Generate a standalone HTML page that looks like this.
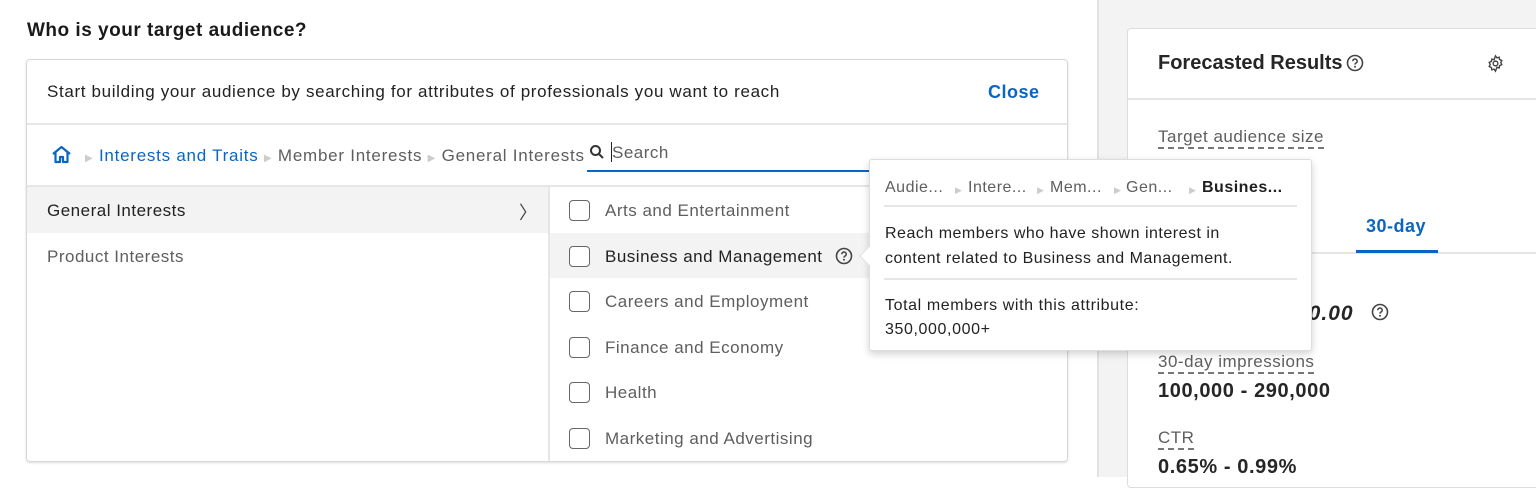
<!DOCTYPE html>
<html><head><style>
*{box-sizing:border-box;margin:0;padding:0}
body{width:1536px;height:477px;overflow:hidden;position:relative;background:#fff;font-family:"Liberation Sans",sans-serif;color:#1f1f1f;letter-spacing:0.5px}
.a{position:absolute}
.t{font-size:17px;color:#5e5e5e;white-space:nowrap}
.cb{position:absolute;left:569px;width:21px;height:21px;border:1.5px solid #666;border-radius:4px;background:#fff}
.dot{border-bottom:2px dashed #777;padding-bottom:1px}
.sep{color:#ccc;font-size:9px;position:absolute;top:185px}
</style></head><body>
<div class="a" style="left:1097px;top:0;width:439px;height:477px;background:#f3f3f3;border-left:2px solid #e2e2e2"></div>
<div class="a" style="left:1127px;top:28px;width:420px;height:460px;background:#fff;border:1px solid #ddd;border-radius:4px"></div>
<div class="a" style="left:1128px;top:98px;width:408px;height:2px;background:#e6e6e6"></div>
<div class="a" style="left:1158px;top:52px;font-size:20px;font-weight:bold;color:#262626;letter-spacing:0">Forecasted Results</div>
<svg class="a" style="left:1346px;top:54px" width="18" height="18" viewBox="0 0 18 18"><circle cx="9" cy="9" r="7.5" fill="none" stroke="#444" stroke-width="1.6"/><path d="M6.8 7.2a2.2 2.2 0 1 1 3 2c-.6.3-.8.7-.8 1.4" fill="none" stroke="#444" stroke-width="1.5"/><circle cx="9" cy="12.8" r="1" fill="#444"/></svg>
<svg class="a" style="left:1486px;top:54px" width="19" height="19" viewBox="0 0 20 20"><path d="M10 2l1.5 2 2.4-.6.4 2.4 2.3 1-1 2.2 1 2.2-2.3 1-.4 2.4-2.4-.6L10 18l-1.5-2-2.4.6-.4-2.4-2.3-1 1-2.2-1-2.2 2.3-1 .4-2.4 2.4.6z" fill="none" stroke="#444" stroke-width="1.5"/><circle cx="10" cy="10" r="2.5" fill="none" stroke="#444" stroke-width="1.5"/></svg>
<div class="a t" style="left:1158px;top:127px"><span class="dot">Target audience size</span></div>
<div class="a" style="left:1128px;top:252px;width:408px;height:2px;background:#e6e6e6"></div>
<div class="a" style="left:1366px;top:216px;font-size:18px;font-weight:bold;color:#0a66c2">30-day</div>
<div class="a" style="left:1356px;top:250px;width:82px;height:3px;background:#0a66c2"></div>
<div class="a" style="left:1296px;top:302px;font-size:21px;font-weight:bold;font-style:italic;color:#262626;letter-spacing:1px">50.00</div>
<svg class="a" style="left:1371px;top:303px" width="18" height="18" viewBox="0 0 18 18"><circle cx="9" cy="9" r="7.5" fill="none" stroke="#444" stroke-width="1.6"/><path d="M6.8 7.2a2.2 2.2 0 1 1 3 2c-.6.3-.8.7-.8 1.4" fill="none" stroke="#444" stroke-width="1.5"/><circle cx="9" cy="12.8" r="1" fill="#444"/></svg>
<div class="a t" style="left:1158px;top:352px"><span class="dot">30-day impressions</span></div>
<div class="a" style="left:1158px;top:380px;font-size:20px;font-weight:bold;color:#262626;letter-spacing:0.6px">100,000 - 290,000</div>
<div class="a t" style="left:1158px;top:428px"><span class="dot">CTR</span></div>
<div class="a" style="left:1158px;top:456px;font-size:20px;font-weight:bold;color:#262626;letter-spacing:0.6px">0.65% - 0.99%</div>

<div class="a" style="left:27px;top:20px;font-size:19px;font-weight:bold;color:#1a1a1a">Who is your target audience?</div>
<div class="a" style="left:26px;top:59px;width:1042px;height:403px;border:1px solid #d9d9d9;border-radius:4px;box-shadow:0 1px 2px rgba(0,0,0,.15)"></div>
<div class="a" style="left:47px;top:82px;font-size:17px;color:#222;letter-spacing:0.65px">Start building your audience by searching for attributes of professionals you want to reach</div>
<div class="a" style="left:988px;top:82px;font-size:18px;font-weight:bold;color:#0a66c2">Close</div>
<div class="a" style="left:27px;top:123px;width:1040px;height:2px;background:#e6e6e6"></div>
<svg class="a" style="left:51px;top:145px" width="21" height="19" viewBox="0 0 21 19"><path d="M2 9L10.5 2 19 9M4.5 7.5V17h4.5v-5h3v5h4.5V7.5" fill="none" stroke="#0a66c2" stroke-width="2.2" stroke-linejoin="round"/></svg>
<div class="a t" style="left:85px;top:146px;font-size:17px;letter-spacing:0.75px"><span style="color:#ccc;font-size:10px">▶</span> <span style="color:#0a66c2">Interests and Traits</span> <span style="color:#ccc;font-size:10px">▶</span> Member Interests <span style="color:#ccc;font-size:10px">▶</span> General Interests</div>
<svg class="a" style="left:589px;top:144px" width="16" height="16" viewBox="0 0 16 16"><circle cx="6.5" cy="6.5" r="4.5" fill="none" stroke="#333" stroke-width="2"/><path d="M10 10l4 4" stroke="#333" stroke-width="2"/></svg>
<div class="a t" style="left:612px;top:143px">Search</div>
<div class="a" style="left:611px;top:142px;width:1px;height:20px;background:#222"></div>
<div class="a" style="left:587px;top:170px;width:290px;height:2px;background:#0a66c2"></div>
<div class="a" style="left:27px;top:185px;width:1040px;height:2px;background:#e6e6e6"></div>
<div class="a" style="left:27px;top:187px;width:521px;height:46px;background:#f3f3f3"></div>
<div class="a" style="left:548px;top:187px;width:2px;height:274px;background:#e6e6e6"></div>
<div class="a" style="left:47px;top:201px;font-size:17px;color:#222">General Interests</div>
<div class="a" style="left:519px;top:199px;font-size:18px;color:#444">〉</div>
<div class="a t" style="left:47px;top:247px">Product Interests</div>
<div class="a" style="left:550px;top:233px;width:320px;height:45px;background:#f3f3f3"></div>
<div class="cb" style="top:200px"></div><div class="a t" style="left:605px;top:201px">Arts and Entertainment</div>
<div class="cb" style="top:246px"></div><div class="a t" style="left:605px;top:247px;color:#222">Business and Management</div>
<svg class="a" style="left:835px;top:247px" width="18" height="18" viewBox="0 0 18 18"><circle cx="9" cy="9" r="7.5" fill="none" stroke="#444" stroke-width="1.6"/><path d="M6.8 7.2a2.2 2.2 0 1 1 3 2c-.6.3-.8.7-.8 1.4" fill="none" stroke="#444" stroke-width="1.5"/><circle cx="9" cy="12.8" r="1" fill="#444"/></svg>
<div class="cb" style="top:291px"></div><div class="a t" style="left:605px;top:292px">Careers and Employment</div>
<div class="cb" style="top:337px"></div><div class="a t" style="left:605px;top:338px">Finance and Economy</div>
<div class="cb" style="top:382px"></div><div class="a t" style="left:605px;top:383px">Health</div>
<div class="cb" style="top:428px"></div><div class="a t" style="left:605px;top:429px">Marketing and Advertising</div>

<div class="a" style="left:869px;top:159px;width:443px;height:192px;background:#fff;border:1px solid #ddd;border-radius:3px;box-shadow:0 3px 8px rgba(0,0,0,.18)"></div>
<div class="a" style="left:862px;top:249px;width:14px;height:14px;background:#fff;transform:rotate(45deg);border-left:1px solid #ddd;border-bottom:1px solid #ddd"></div>
<div class="a t" style="left:885px;top:179px;font-size:16px">Audie...</div>
<span class="a sep" style="left:955px">▶</span>
<div class="a t" style="left:968px;top:179px;font-size:16px">Intere...</div>
<span class="a sep" style="left:1037px">▶</span>
<div class="a t" style="left:1050px;top:179px;font-size:16px">Mem...</div>
<span class="a sep" style="left:1114px">▶</span>
<div class="a t" style="left:1126px;top:179px;font-size:16px">Gen...</div>
<span class="a sep" style="left:1189px">▶</span>
<div class="a t" style="left:1202px;top:179px;font-size:16px;font-weight:bold;color:#1f1f1f">Busines...</div>
<div class="a" style="left:884px;top:205px;width:413px;height:2px;background:#e6e6e6"></div>
<div class="a" style="left:885px;top:221px;font-size:16px;line-height:25px;color:#222;letter-spacing:0.5px">Reach members who have shown interest in<br>content related to Business and Management.</div>
<div class="a" style="left:884px;top:278px;width:413px;height:2px;background:#e6e6e6"></div>
<div class="a" style="left:885px;top:294px;font-size:16px;line-height:24px;color:#222;letter-spacing:0.6px">Total members with this attribute:<br>350,000,000+</div>
</body></html>
